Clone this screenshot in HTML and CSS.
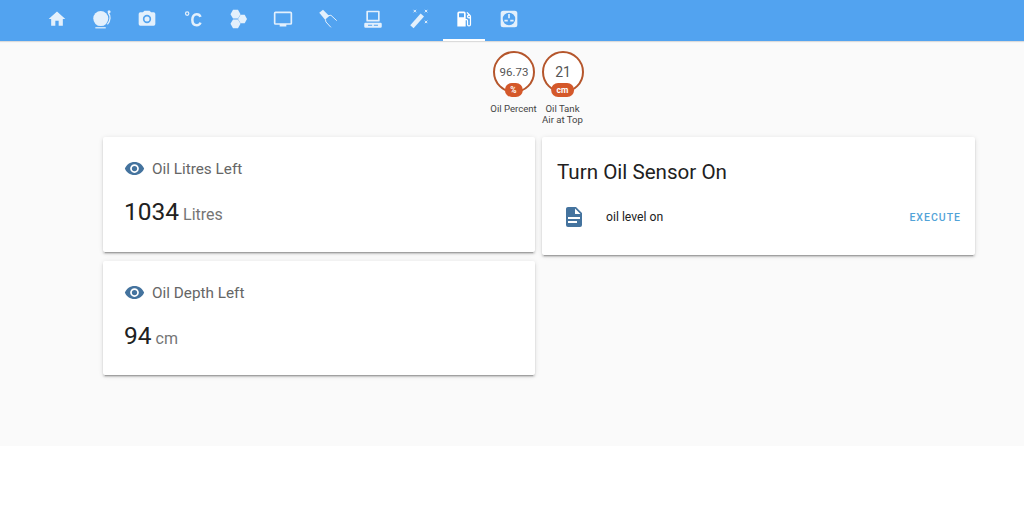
FILE: index.html
```html
<!DOCTYPE html>
<html lang="en">
<head>
  <meta charset="UTF-8" />
  <title>Home Assistant - Oil</title>
  <link rel="stylesheet" href="styles.css">
</head>
<body>
  <header class="tabs">
    <a class="tab"><svg viewBox="0 0 24 24"><path d="M10 20v-6h4v6h5v-8h3L12 3 2 12h3v8z"/></svg></a>
    <a class="tab"><svg viewBox="0 0 24 24"><circle cx="10.500" cy="11.500" r="9"/><path d="M4 21.800h12.500v1.500H4z"/><path class="line" d="M19.500 4.500c3 3.500 3 9.500-1 14"/><circle cx="20.500" cy="3.300" r="1.800"/></svg></a>
    <a class="tab"><svg viewBox="0 0 24 24"><path d="M4 4h3l2-2h6l2 2h3a2 2 0 0 1 2 2v12a2 2 0 0 1-2 2H4a2 2 0 0 1-2-2V6a2 2 0 0 1 2-2m8 3a5 5 0 0 0-5 5 5 5 0 0 0 5 5 5 5 0 0 0 5-5 5 5 0 0 0-5-5m0 2a3 3 0 0 1 3 3 3 3 0 0 1-3 3 3 3 0 0 1-3-3 3 3 0 0 1 3-3z"/></svg></a>
    <a class="tab"><svg viewBox="0 0 24 24"><circle class="line" cx="5" cy="5.500" r="2"/><path class="line thick" d="M21 9.500c-.8-2.200-2.400-3.200-4.500-3.200-3.300 0-5.300 2.600-5.300 6.600s2 6.600 5.300 6.600c2.100 0 3.700-1 4.500-3.200"/></svg></a>
    <a class="tab"><svg viewBox="0 0 24 24"><path d="M6 1h6l3 5.200-3 5.200H6L3 6.200z"/><path d="M6 12.600h6l3 5.200-3 5.200H6l-3-5.200z"/><path d="M15 6.800h5l2.800 5.200-2.800 5.200h-5L12 12z"/></svg></a>
    <a class="tab"><svg viewBox="0 0 24 24"><path d="M21 17H3V5h18m0-2H3a2 2 0 0 0-2 2v12a2 2 0 0 0 2 2h5v2h8v-2h5a2 2 0 0 0 2-2V5a2 2 0 0 0-2-2z"/></svg></a>
    <a class="tab"><svg viewBox="0 0 24 24"><path d="M1.500 4.500 6 1l7.500 7.500-5 4.500z"/><path class="line thin" d="M12 8l3.500-.5 7 6.500M9 12.500l.5 3 6 6.500"/></svg></a>
    <a class="tab"><svg viewBox="0 0 24 24"><path d="M5 2h14a1 1 0 0 1 1 1v11a1 1 0 0 1-1 1H5a1 1 0 0 1-1-1V3a1 1 0 0 1 1-1m1 2v9h12V4z"/><path d="M3 16.500h18a1.500 1.500 0 0 1 1.500 1.500v3a1.500 1.500 0 0 1-1.500 1.500H3A1.500 1.500 0 0 1 1.500 21v-3A1.500 1.500 0 0 1 3 16.500m3 2.300v1.400h5v-1.400zm7 0v1.400h5v-1.400z"/></svg></a>
    <a class="tab"><svg viewBox="0 0 24 24"><path d="M1.500 19.500 14 5.500l4 3.500L5.500 23z"/><path class="line thin" d="M5.500 1l3 3m0-3-3 3M19 1l3 3m0-3-3 3M19 14l3 3m0-3-3 3"/></svg></a>
    <a class="tab active"><svg viewBox="0 0 24 24"><path d="M18 10a1 1 0 0 1-1-1 1 1 0 0 1 1-1 1 1 0 0 1 1 1 1 1 0 0 1-1 1m-6 0H6V5h6m7.770 2.230l.01-.01-3.720-3.720L15 4.560l2.110 2.110C16.170 7 15.500 7.930 15.500 9a2.500 2.500 0 0 0 2.500 2.500c.36 0 .69-.08 1-.21v7.210a1 1 0 0 1-1 1 1 1 0 0 1-1-1V14a2 2 0 0 0-2-2h-1V5a2 2 0 0 0-2-2H6a2 2 0 0 0-2 2v16h10v-7.500h1.500v5A2.500 2.500 0 0 0 18 21a2.500 2.500 0 0 0 2.500-2.500V9c0-.69-.28-1.320-.73-1.770z"/></svg></a>
    <a class="tab"><svg viewBox="0 0 24 24"><path fill-rule="evenodd" d="M5 2h14a3 3 0 0 1 3 3v14a3 3 0 0 1-3 3H5a3 3 0 0 1-3-3V5a3 3 0 0 1 3-3m7 2.500a7.500 7.500 0 1 0 0 15 7.500 7.500 0 0 0 0-15z"/><path d="M11 6h2v5h-2zM6.500 13h4v2h-4zM13.500 13h4v2h-4z"/></svg></a>
  </header>

  <main>
    <div class="badges">
      <div class="badge">
        <div class="ring">
          <span class="value small">96.73</span>
          <span class="unit">%</span>
        </div>
        <div class="badge-label">Oil Percent</div>
      </div>
      <div class="badge">
        <div class="ring">
          <span class="value">21</span>
          <span class="unit">cm</span>
        </div>
        <div class="badge-label">Oil Tank Air at Top</div>
      </div>
    </div>

    <div class="columns">
      <div class="column">
        <div class="card sensor">
          <div class="sensor-name">
            <svg viewBox="0 0 24 24"><path d="M12 9a3 3 0 0 0-3 3 3 3 0 0 0 3 3 3 3 0 0 0 3-3 3 3 0 0 0-3-3m0 8a5 5 0 0 1-5-5 5 5 0 0 1 5-5 5 5 0 0 1 5 5 5 5 0 0 1-5 5m0-12.500C7 4.500 2.730 7.610 1 12c1.730 4.390 6 7.500 11 7.500s9.270-3.110 11-7.500c-1.730-4.390-6-7.500-11-7.500z"/></svg>
            <span>Oil Litres Left</span>
          </div>
          <div class="reading">1034<span class="reading-unit">Litres</span></div>
        </div>
        <div class="card sensor">
          <div class="sensor-name">
            <svg viewBox="0 0 24 24"><path d="M12 9a3 3 0 0 0-3 3 3 3 0 0 0 3 3 3 3 0 0 0 3-3 3 3 0 0 0-3-3m0 8a5 5 0 0 1-5-5 5 5 0 0 1 5-5 5 5 0 0 1 5 5 5 5 0 0 1-5 5m0-12.500C7 4.500 2.730 7.610 1 12c1.730 4.390 6 7.500 11 7.500s9.270-3.110 11-7.500c-1.730-4.390-6-7.500-11-7.500z"/></svg>
            <span>Oil Depth Left</span>
          </div>
          <div class="reading">94<span class="reading-unit">cm</span></div>
        </div>
      </div>
      <div class="column">
        <div class="card script">
          <h2>Turn Oil Sensor On</h2>
          <div class="script-row">
            <svg viewBox="0 0 24 24"><path d="M13 9h5.500L13 3.500V9M6 2h8l6 6v12a2 2 0 0 1-2 2H6a2 2 0 0 1-2-2V4c0-1.110.89-2 2-2m9 16v-2H6v2h9m3-4v-2H6v2h12z"/></svg>
            <span class="script-name">oil level on</span>
            <a class="execute">Execute</a>
          </div>
        </div>
      </div>
    </div>
  </main>
</body>
</html>
```

FILE: styles.css
```css
/* Layout & Reset */
* {
  box-sizing: border-box;
  margin: 0;
  padding: 0;
}
body {
  font-family: Roboto, "Liberation Sans", sans-serif;
  background: #fff;
  color: #212121;
}

/* Tabs */
.tabs {
  height: 41px;
  padding-left: 34.500px;
  background: #52a3f0;
  display: flex;
  box-shadow: 0 1px 1px rgba(0,0,0,0.12);
  position: relative;
}
.tab {
  width: 42px;
  height: 41px;
  margin: 0 1.600px;
  display: flex;
  align-items: center;
  justify-content: center;
  padding-bottom: 1px;
  border-bottom: 2px solid transparent;
}
.tab.active {
  border-bottom-color: #fff;
}
.tab svg {
  width: 20px;
  height: 20px;
  fill: #e3f0fc;
}
.tab.active svg {
  fill: #fff;
}
.tab .line {
  fill: none;
  stroke: #e3f0fc;
  stroke-width: 1.500;
}
.tab .line.thick {
  stroke-width: 3;
}
.tab .line.thin {
  stroke-width: 1.200;
}

/* Main */
main {
  height: 405px;
  background: #fafafa;
  padding: 10px 0 0 54px;
}

/* Badges */
.badges {
  display: flex;
  justify-content: center;
  gap: 7px;
  margin-right: 2px;
}
.badge {
  width: 42px;
  display: flex;
  flex-direction: column;
  align-items: center;
}
.ring {
  width: 42px;
  height: 42px;
  border: 2px solid #b5562c;
  border-radius: 50%;
  background: #fff;
  display: flex;
  align-items: center;
  justify-content: center;
  position: relative;
}
.value {
  font-size: 14px;
  color: #555;
  padding: 0 0 1px 1px;
}
.value.small {
  font-size: 11.500px;
}
.unit {
  position: absolute;
  left: 50%;
  bottom: -6px;
  transform: translateX(-50%);
  min-width: 18px;
  height: 14px;
  padding: 0 6px;
  border-radius: 7px;
  background: #d4582a;
  color: #fff;
  font-size: 8.500px;
  font-weight: 700;
  line-height: 14px;
  text-align: center;
}
.badge-label {
  width: 48px;
  margin-top: 10px;
  font-size: 9.600px;
  line-height: 11px;
  color: #444;
  text-align: center;
  flex-shrink: 0;
}

/* Cards */
.columns {
  display: flex;
  justify-content: center;
  gap: 7px;
  margin-top: 12px;
}
.column {
  width: 433px;
  display: flex;
  flex-direction: column;
  gap: 9px;
}
.column:first-child {
  width: 432px;
}
.card {
  background: #fff;
  border-radius: 2px;
  box-shadow: 0 2px 2px rgba(0,0,0,0.14), 0 1px 5px rgba(0,0,0,0.12), 0 3px 1px -2px rgba(0,0,0,0.2);
}
.sensor {
  height: 115px;
  padding: 21px 21px 0;
}
.sensor + .sensor {
  height: 114px;
}
.sensor-name {
  display: flex;
  align-items: center;
  gap: 7px;
  font-size: 15.300px;
  font-weight: 400;
  color: #666;
}
.sensor-name svg {
  width: 21px;
  height: 21px;
  fill: #44739e;
}
.reading {
  margin-top: 17px;
  font-size: 24.500px;
  line-height: 32px;
  color: #212121;
}
.reading-unit {
  margin-left: 4px;
  font-size: 16px;
  color: #757575;
}

/* Script card */
.script {
  height: 118px;
  padding: 21px 14px 0 15px;
}
.script h2 {
  font-size: 20.600px;
  font-weight: 400;
  line-height: 28px;
}
.script-row {
  display: flex;
  align-items: center;
  margin-top: 19px;
  padding-left: 5px;
  height: 24px;
  font-size: 12.200px;
}
.script-row svg {
  width: 24px;
  height: 24px;
  fill: #44739e;
}
.script-name {
  margin-left: 20px;
  flex-grow: 1;
}
.execute {
  font-size: 10.500px;
  font-weight: 500;
  letter-spacing: 1px;
  text-transform: uppercase;
  color: #52a3d8;
}
```
